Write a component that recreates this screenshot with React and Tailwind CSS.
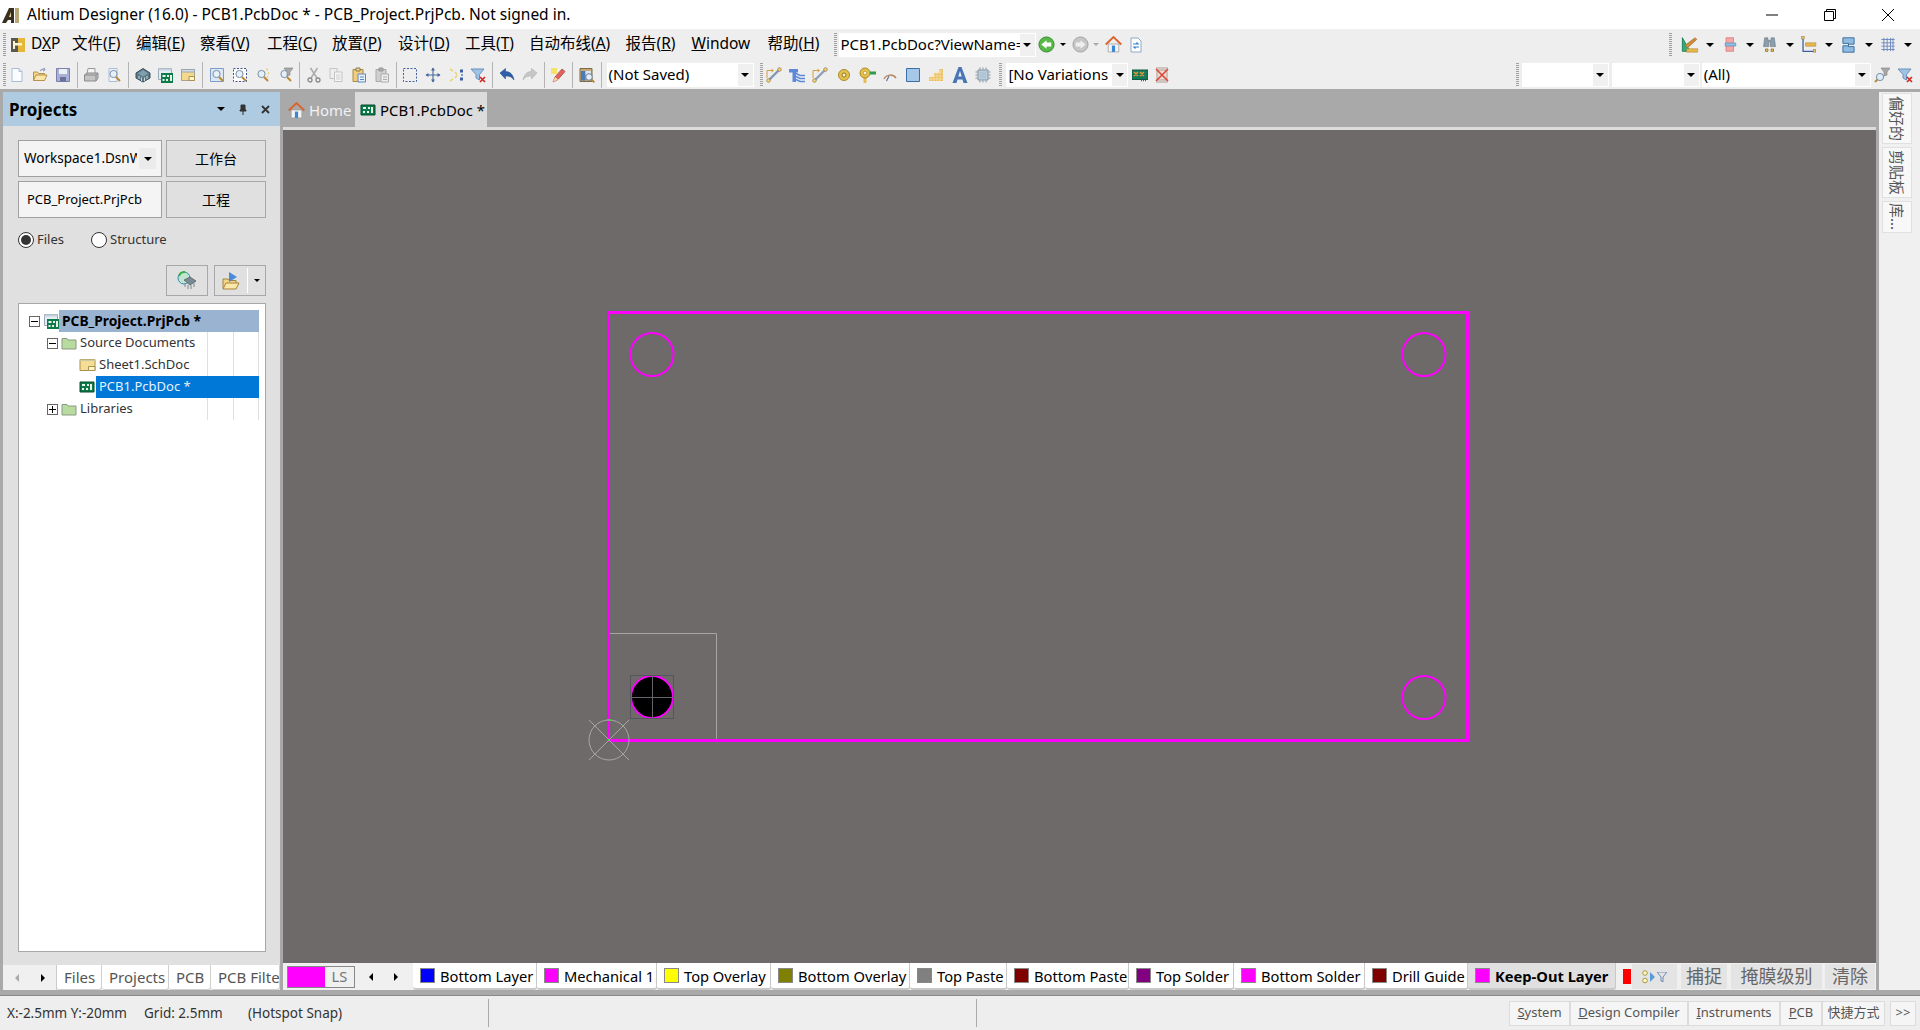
import React from "react";

const S = ({ children, w = 16, h = 16, vb = "0 0 16 16", cls = "" }) => (
  <svg width={w} height={h} viewBox={vb} className={"shrink-0 " + cls}>{children}</svg>
);
const Caret = ({ s = 4, cls = "" }) => (
  <svg width={s * 2} height={s} viewBox="0 0 8 4" className={"shrink-0 " + cls}><path d="M0 0h8L4 4z" fill="#000" /></svg>
);

const New = () => <S><path d="M3 1.500h7l3 3v10H3z" fill="#fafcff" stroke="#a9bdd8" /><path d="M10 1.500v3h3" fill="#dfe8f4" stroke="#a9bdd8" /></S>;
const Open = () => <S><path d="M1.500 5h4l1 1.500h6v7h-11z" fill="#f4d48a" stroke="#b8924a" /><path d="M1.500 13.500 4 8h11l-2.500 5.500z" fill="#fbe6ac" stroke="#b8924a" /><path d="M8 4q2.500-3 5-1.500l-1-1.500M13 2.500 11 4" fill="none" stroke="#8a9ab0" strokeWidth="1.100" /></S>;
const Save = () => <S><path d="M1.500 1.500h13v13h-13z" fill="#a8b0d8" stroke="#7a80a8" /><path d="M4 2h8v5H4z" fill="#eef0f6" /><path d="M5 10h6v4.500H5z" fill="#6a7096" /></S>;
const Print = () => <S><path d="M5 1.500h7v5H4z" fill="#f4f4f4" stroke="#9a9a9a" /><path d="M1.500 8 4 6h11v5l-2 3H1.500z" fill="#c4c4c4" stroke="#8a8a8a" /><path d="M1.500 8H13v6M13 8l2-2" fill="none" stroke="#8a8a8a" /></S>;
const Mag = () => <><circle cx="7.500" cy="7" r="3.600" fill="#e4f0fa" stroke="#7a8ea8" /><path d="M10 10l4 4" stroke="#b88a32" strokeWidth="2" /></>;
const Preview = () => <S><path d="M3 1.500h8v13H3z" fill="#f2f6fb" stroke="#a9bdd8" /><Mag /></S>;
const Cube = () => <S><path d="M8 1.500 15 6v5l-7 4-7-4V6z" fill="#5d7a88" stroke="#3a4c58" /><path d="M8 3 13 6.500 8 9.500 3 6.500z" fill="#7fa0b0" /><path d="M4 9v3M6.500 10.500v3.500M9.500 10.500v3.500M12 9v3" stroke="#c8d8e0" /></S>;
const Board = () => <S><path d="M1 3h14v10H1z" fill="#0b7b4a" stroke="#064d2e" /><path d="M3 5h3v2H3zM8 5h2v2H8zM3 9h2v2H3zM7 9h2v2H7zM11 5h2v6h-2z" fill="#e8f4e8" /></S>;
const BoardDoc = () => <S><path d="M1.500 1.500h13v11h-13z" fill="#e4ecf4" stroke="#9aa8b8" /><path d="M1.500 1.500h13v2h-13z" fill="#c4d0dc" /><path d="M4 6h12v10H4z" fill="#0b7b4a" /><path d="M5.500 8h3v2h-3zM10 8h2v2h-2zM5.500 12h2v2h-2zM9 12h2v2H9zM13 8h2v6h-2z" fill="#e8f4e8" /></S>;
const Sheet = () => <S><path d="M1.500 2.500h13v11h-13z" fill="#f3d98e" stroke="#a8a290" /><path d="M1.500 2.500h13v2.500h-13z" fill="#d4dce6" stroke="#9aa4b0" /><path d="M9 9.500h5.500v4H9z" fill="#fff3c8" stroke="#a8924e" /></S>;
const ZoomA = () => <S><path d="M1.500 1.500h13v13h-13z" fill="#dbe7f5" stroke="#7d9dc8" /><Mag /></S>;
const ZoomB = () => <S><path d="M1.500 1.500h13v13h-13z" fill="#fff" stroke="#3f5488" strokeDasharray="2 1.500" /><Mag /></S>;
const ZoomC = () => <S><Mag /><path d="M13 1.500v2M15 5.500l-1 1.500M13.500 9v1.500" stroke="#e7d06a" strokeWidth="1.500" /></S>;
const ZoomF = () => <S><Mag /><path d="M7 1h9l-3 4v3l-3 1V5z" fill="#a8a8a8" stroke="#808080" strokeWidth=".6" /></S>;
const Cut = () => <S><path d="M4.500 1 11 11M11.500 1 5 11" stroke="#aaa" strokeWidth="1.500" /><circle cx="4" cy="13" r="2" fill="#eee" stroke="#8a8a8a" strokeWidth="1.300" /><circle cx="12" cy="13" r="2" fill="#eee" stroke="#8a8a8a" strokeWidth="1.300" /></S>;
const Copy = () => <S><path d="M2 1.500h7v10H2z" fill="#eee" stroke="#c4c4c4" /><path d="M6.500 5h7.500v9.500H6.500z" fill="#f6f6f6" stroke="#c4c4c4" /><path d="M8 8h4.500M8 10h4.500M8 12h4.500" stroke="#cfcfcf" /></S>;
const Paste = ({ g }) => <S><path d="M2 2.500h10v12H2z" fill={g ? "#d0d0d0" : "#f0cc7c"} stroke={g ? "#aaa" : "#a98a44"} /><path d="M5 1h4v3H5z" fill={g ? "#aaa" : "#e8d8a8"} stroke={g ? "#999" : "#8a7a44"} /><path d="M7 7h7.500v8H7z" fill={g ? "#eee" : "#e8f0fa"} stroke={g ? "#aaa" : "#5e86c0"} /><path d="M9 10h4M9 12.500h4" stroke={g ? "#aaa" : "#5e86c0"} /></S>;
const Sel = () => <S><path d="M1.500 1.500h13v13h-13z" fill="none" stroke="#3f5ea0" strokeDasharray="2 1.500" /></S>;
const Move = () => <S><path d="M8 1v14M1 8h14" stroke="#47689e" strokeWidth="1.100" /><path d="M8 .5 6 3.500h4zM8 15.500l-2-3h4zM.5 8l3-2v4zM15.500 8l-3-2v4z" fill="#47689e" /></S>;
const Dots = () => <S><path d="M2 2l3 2M7 5l2 2.500M7 11l2-2.500M2 14l3-2" stroke="#e7d678" strokeWidth="1.700" /><path d="M12 2.500h3v3h-3zM12 10.500h3v3h-3z" fill="#3f5ea0" /><path d="M13 7h2v2h-2z" fill="#7f9ac8" /></S>;
const FilterX = () => <S><path d="M1 2h13L9.500 7.500V13L6 11V7.500z" fill="#9fc3e4" stroke="#6b90b8" /><path d="M10 10l5 5M15 10l-5 5" stroke="#d02a2a" strokeWidth="1.700" /></S>;
const Undo = () => <S><path d="M1 6 6.500 1.500v3q7 0 8.500 8.500-3-4.500-8.500-4v3z" fill="#2f5fa8" stroke="#1f4478" strokeWidth=".5" /></S>;
const Redo = () => <S><path d="M15 6 9.500 1.500v3Q2.500 4.500 1 13q3-4.500 8.500-4v3z" fill="#c6c6c6" stroke="#aaa" strokeWidth=".5" /></S>;
const Pencil = () => <S><path d="M3 15l2-5 7-8 3 2.500-7 8z" fill="#e3615a" stroke="#a83a36" strokeWidth=".7" /><path d="M1 1h6v6H1z" fill="#f4e26a" /><path d="M3 15l2-5 3 2.500z" fill="#f3d9a8" /></S>;
const Libr = () => <S><path d="M1 1.500h12v13H1z" fill="#c8a878" stroke="#7a6a48" /><path d="M2 4h4.500v9.500H2z" fill="#4a7ab8" /><path d="M6.500 4H12v4H6.500z" fill="#d8e4f0" /><circle cx="10" cy="10" r="3.300" fill="#e4eef8" stroke="#6d7f96" /><path d="M12.300 12.300l3 3" stroke="#a88434" strokeWidth="1.800" /></S>;
const Track = ({ dash }) => <S><path d="M3 13 13 3" stroke={dash ? "#8fa0b8" : "#8296b4"} strokeWidth="2.400" /><path d="M1 11V3.500h6M5.500 2l2 1.500-2 1.500" stroke="#d0a040" strokeWidth="1" fill="none" /><circle cx="2.500" cy="13.500" r="1.800" fill="#f0d27c" stroke="#8a6a26" strokeWidth=".6" /><circle cx="13.500" cy="2.500" r="1.800" fill="#f0d27c" stroke="#8a6a26" strokeWidth=".6" /></S>;
const Bus = () => <S><path d="M0 2h9v3.500H7V15H3.500V5.500H0z" fill="#5c8ad8" /><path d="M7 6.500l4 2h5M7 9.500l4 2h5M7 12.500l4 2h5" stroke="#5c8ad8" strokeWidth="1.400" fill="none" /></S>;
const Pad = () => <S><circle cx="8" cy="8" r="5.500" fill="#e6c04c" stroke="#a88c28" /><circle cx="8" cy="8" r="2" fill="#fff6cf" stroke="#8c7420" /></S>;
const Via = () => <S w={18} vb="0 0 18 16"><path d="M7 10v6" stroke="#e6bc54" strokeWidth="3" /><circle cx="7" cy="6" r="5" fill="#e6c04c" stroke="#a88c28" /><circle cx="7" cy="6" r="1.800" fill="#fff6cf" stroke="#8c7420" strokeWidth=".5" /><path d="M12 4.500h6v3h-6z" fill="#2f9b4a" /></S>;
const Arc = () => <S><path d="M2 12A7 7 0 0 1 14 11" fill="none" stroke="#b58a5a" strokeWidth="1.400" /><path d="M7 9l-2.500 5" stroke="#5f77a8" strokeWidth="1.200" /></S>;
const Fill = () => <S><path d="M1.500 1.500h13v13h-13z" fill="#a6c8e8" stroke="#3e6ea6" /></S>;
const Poly = () => <S><path d="M1 14h14V2H11v4H6v4H1z" fill="#e8be5e" /><path d="M1 12h14M1 9h14M3 10v4M6 6v8M9 3v11M12 2v12M6 6h9M11 4h4" stroke="#fbe6b0" strokeWidth=".7" /></S>;
const AIcon = () => <svg width="16" height="18" viewBox="0 0 16 18" className="shrink-0"><path d="M.5 17 6.500 1h3L15.500 17h-4l-1-3.500H5.500L4.500 17zM6.300 10.500h3.400L8 5z" fill="#4a74b4" /></svg>;
const Chip = () => <S><path d="M3 3h10v10H3z" fill="#c4d4e0" stroke="#7e8f9c" /><path d="M5 .5v2M8 .5v2M11 .5v2M5 13.500v2M8 13.500v2M11 13.500v2M.5 5h2M.5 8h2M.5 11h2M13.500 5h2M13.500 8h2M13.500 11h2" stroke="#8296a6" /><path d="M4.500 4.500h7v7h-7z" fill="#b0c6d6" /></S>;
const VarOn = () => <S><path d="M0 3h16v9.500H0z" fill="#157a58" stroke="#0c5a40" /><path d="M2 5l4 4M6 5 2 9M8 5l4 4M12 5 8 9" stroke="#e89a3a" strokeWidth="1.500" /><path d="M9 13.500h6" stroke="#157a58" strokeWidth="1.500" strokeDasharray="1 1" /></S>;
const VarOff = () => <S><path d="M2 1h12M2 15h12M3 3h10v10H3z" fill="#f0dccc" stroke="#b09a90" /><path d="M2 2l12 12M14 2 2 14" stroke="#d8443c" strokeWidth="1.500" /></S>;
const Back = () => <S w={17} h={17} vb="0 0 18 18"><circle cx="9" cy="9" r="8" fill="#58b848" stroke="#2f8a2a" /><path d="M3.500 9 9 4.500V7h5v4H9v2.500z" fill="#fff" /></S>;
const Fwd = () => <S w={17} h={17} vb="0 0 18 18"><circle cx="9" cy="9" r="8" fill="#c6c6c6" stroke="#a0a0a0" /><path d="M14.500 9 9 4.500V7H4v4h5v2.500z" fill="#efefef" /></S>;
const Home = () => <S w={17} h={17} vb="0 0 16 16"><path d="M3 7.500h10V15H3z" fill="#f4f4f4" stroke="#9a9a9a" strokeWidth=".7" /><path d="M6.500 9h3v6h-3z" fill="#3c86d8" /><path d="M.7 8 8 1l7.300 7" fill="none" stroke="#d8642c" strokeWidth="1.800" /></S>;
const DocSwap = () => <S><path d="M3 1h7l3 3v11H3z" fill="#fff" stroke="#8fa8c8" /><path d="M5 7h5l-1.500-1.500M11 10H6l1.500 1.500" stroke="#2f7fd0" fill="none" strokeWidth="1.200" /></S>;
const Rule = () => <S w={18} h={17} vb="0 0 20 20"><path d="M1 2v16h9z" fill="#28b07a" stroke="#0e7a50" /><path d="M4 11 16 2l2 2L7 14z" fill="#d08a3a" stroke="#8a5a20" strokeWidth=".6" /><path d="M6 15h13v4H6z" fill="#e8b84e" stroke="#a07a24" strokeWidth=".6" /></S>;
const Align = () => <S w={13} h={15} vb="0 0 16 20"><path d="M2 1h10v18H2z" fill="#f7a6a6" stroke="#d07878" /><path d="M1 8h14v4H1z" fill="#8ec0e4" stroke="#5f8fb8" /></S>;
const Bino = () => <S w={13} h={16} vb="0 0 16 20"><path d="M2 1h4v3h4V1h4l1.500 11H9V6H7v6H.5z" fill="#8a9eae" stroke="#50626e" strokeWidth=".6" /><path d="M3 15h3v3H3zM10 15h3v3h-3z" fill="#eec86c" stroke="#8a6a26" /></S>;
const Dim = () => <S w={16} h={17} vb="0 0 18 20"><path d="M2 2v16h15" fill="none" stroke="#3f5ea0" strokeWidth="1.500" /><path d="M5 8h12v4H5z" fill="#e8b84e" stroke="#a07a24" strokeWidth=".6" /><rect x=".5" y=".5" width="3" height="3" fill="#e4c46c" stroke="#8a6a26" strokeWidth=".5" /><rect x="14" y="16" width="3" height="3" fill="#e4c46c" stroke="#8a6a26" strokeWidth=".5" /></S>;
const Room = () => <S w={15} h={16} vb="0 0 16 20"><path d="M1 1h14v8H8v3h7v7H1v-8h7V8H1z" fill="#8fbce0" stroke="#3a6ea0" strokeWidth="1.200" /></S>;
const Grid = () => <S w={14} h={15} vb="0 0 16 18"><path d="M3 1v16M7 1v16M11 1v16M14 1v16M0 3h16M0 7h16M0 11h16M0 15h16" stroke="#5f7eb8" /></S>;
const FilterG = () => <S><circle cx="6" cy="10" r="3.600" fill="#dcecfa" stroke="#7a8ea8" /><path d="M3.500 12.500 1 15" stroke="#b88a32" strokeWidth="2" /><path d="M7 1h9l-3 4v3l-3 1V5z" fill="#a8a8a8" stroke="#808080" strokeWidth=".6" /></S>;
const AltLogo = () => <S w={18} h={18} vb="0 0 18 18"><path d="M0 17 7 2h5v15H9v-3H6l-2 3z" fill="#3a3020" /><path d="M7 11h2V6z" fill="#e8d8a0" /><path d="M13 2h4v15h-4z" fill="#b8a878" /></S>;
const DxpLogo = () => <S><path d="M1 1h14v14H1z" fill="#5a5a50" /><path d="M8 1h7v14H8z" fill="#e6b83a" /><path d="M3 4h2v8H3zM5 6h7v2.500H5z" fill="#fff6cf" /></S>;
const Folder = () => <S><path d="M1 3.500h5l1 1.500h8v9H1z" fill="#b8dca0" stroke="#8a9a82" /></S>;
const SchIcon = () => <S w={17} h={16} vb="0 0 16 16"><path d="M.5 2.500h15v11H.5z" fill="#f6dd96" stroke="#a8924e" /><path d="M.5 2.500h15v1.500H.5z" fill="#cfc8a0" /><path d="M9 9.500h6.500v4H9z" fill="#fff3c8" stroke="#a8924e" /></S>;
const Refresh = () => <S w={20} h={20} vb="0 0 20 20"><circle cx="7" cy="7" r="6" fill="#c4e4d0" stroke="#2c8fb0" /><path d="M2 5a6 6 0 0 1 6-4" stroke="#3ab048" strokeWidth="2" fill="none" /><path d="M7 9 13 6l6 4-6 4z" fill="#7a8a92" stroke="#4a5860" strokeWidth=".7" /><path d="M8 12v4M11 14v4M14 14v4M17 12v4" stroke="#7a8a92" /></S>;
const OpenArrow = () => <S w={18} h={20} vb="0 0 18 20"><path d="M1 8h5l1 1.500h7v8H1z" fill="#f4d48a" stroke="#a88434" /><path d="M1 18l3-6h13l-3 6z" fill="#fbe6ac" stroke="#a88434" /><path d="M7 1l8 5-8 5z" fill="#4a8ad8" /></S>;
const Gripper = ({ h = 24, cls = "" }) => (
  <span className={"shrink-0 w-[3px] bg-[repeating-linear-gradient(to_bottom,#a0a0a0_0,#a0a0a0_1px,transparent_1px,transparent_2px)] " + cls} style={{ height: h }} />
);
const Sep = () => <span className="shrink-0 w-[6px] flex justify-center"><span className="w-px h-[26px] bg-[#b4b4b4]" /></span>;
const Slot = ({ children, w = "w-[22.700px]" }) => <span className={"shrink-0 h-full flex items-center justify-center " + w}>{children}</span>;

const Combo = ({ text, w, arrow = "w-[15px]" }) => (
  <div className={"shrink-0 h-[24px] bg-white flex items-center " + w}>
    <span className="flex-1 min-w-0 overflow-hidden whitespace-nowrap pl-[2px] pb-[2px] text-[15px] leading-[22px] h-[24px]">{text}</span>
    <span className={"shrink-0 h-[22px] bg-[#f0f0f0] flex items-center justify-center mr-[1px] " + arrow}><Caret /></span>
  </div>
);

const menus = [
  ["文件(", "F", ")", "ml-[13px]", "w-[64px]"],
  ["编辑(", "E", ")", "", "w-[64px]"],
  ["察看(", "V", ")", "", "w-[67px]"],
  ["工程(", "C", ")", "", "w-[65px]"],
  ["放置(", "P", ")", "", "w-[66px]"],
  ["设计(", "D", ")", "", "w-[67px]"],
  ["工具(", "T", ")", "", "w-[64px]"],
  ["自动布线(", "A", ")", "", "w-[96.500px]"],
  ["报告(", "R", ")", "", "w-[66px]"],
];

const tool1 = [
  <New />, <Open />, <Save />, 0, <Print />, <Preview />, 0, <Cube />, <BoardDoc />, <Sheet />, 0,
  <ZoomA />, <ZoomB />, <ZoomC />, <ZoomF />, 0, <Cut />, <Copy />, <Paste />, <Paste g />, 0,
  <Sel />, <Move />, <Dots />, <FilterX />, 0, <Undo />, <Redo />, 0, <Pencil />, 0, <Libr />, 0,
];
const tool2 = [<Track />, <Bus />, <Track dash />, <Pad />, <Via />, <Arc />, <Fill />, <Poly />, <AIcon />, <Chip />];

const layers = [
  ["Bottom Layer", "#0000ff", "w-[124px]"],
  ["Mechanical 1", "#ff00ff", "w-[120px]"],
  ["Top Overlay", "#ffff00", "w-[114px]"],
  ["Bottom Overlay", "#808000", "w-[139px]"],
  ["Top Paste", "#808080", "w-[97px]"],
  ["Bottom Paste", "#800000", "w-[122px]"],
  ["Top Solder", "#800080", "w-[105px]"],
  ["Bottom Solder", "#ff00ff", "w-[131px]"],
  ["Drill Guide", "#800000", "w-[103px]"],
];

const Ctl = ({ children, w }) => (
  <div className={"shrink-0 h-full bg-[#e4e4e4] border border-[#f0f0f0] flex items-center justify-center text-[18px] text-[#666] " + w}>{children}</div>
);

const TreeCols = () => (
  <>
    <span className="w-px h-full bg-[#e0e0e0] shrink-0" />
    <span className="w-[25px] shrink-0" />
    <span className="w-px h-full bg-[#e0e0e0] shrink-0" />
    <span className="w-[24px] shrink-0" />
    <span className="w-px h-full bg-[#e0e0e0] shrink-0" />
  </>
);
const PM = ({ plus, cls }) => (
  <span className={"block w-[11px] h-[11px] border border-[#666] bg-white relative shrink-0 " + cls}>
    <span className="absolute left-[1px] right-[1px] top-[4px] h-px bg-black" />
    {plus && <span className="absolute top-[1px] bottom-[1px] left-[4px] w-px bg-black" />}
  </span>
);

const StatusBtn = ({ children, w, cls = "" }) => (
  <div className={"shrink-0 h-full bg-[#f5f5f5] border border-[#dcdcdc] flex items-center justify-center text-[13px] text-[#555] " + w + " " + cls}>{children}</div>
);

const Rot = ({ t, h }) => (
  <div className={"w-[30px] bg-[#f8f8f8] border border-[#e0e0e0] flex items-center justify-center mb-[3px] text-[15px] text-[#555] [writing-mode:vertical-rl] [text-orientation:sideways] " + h}>{t}</div>
);

const T = ({ children, cls = "" }) => <span className={"shrink-0 pb-[2px] " + cls}>{children}</span>;

export default function App() {
  return (
    <div className="w-[1920px] h-[1030px] overflow-hidden flex flex-col bg-[#eeeeee] text-black font-['Noto_Sans','Noto_Sans_CJK_SC',sans-serif]">
      {/* title */}
      <div className="h-[29px] bg-white flex items-center shrink-0">
        <span className="ml-[2px] mr-[7px]"><AltLogo /></span>
        <span className="text-[15.500px] whitespace-nowrap leading-[29px]">Altium Designer (16.0) - PCB1.PcbDoc * - PCB_Project.PrjPcb. Not signed in.</span>
        <div className="ml-auto flex items-center h-full">
          <span className="w-[58px] flex justify-center"><svg width="14" height="14" viewBox="0 0 14 14"><path d="M1 7h12" stroke="#000" /></svg></span>
          <span className="w-[58px] flex justify-center"><svg width="14" height="14" viewBox="0 0 14 14"><path d="M1.500 3.500h9v9h-9zM3.500 3.500v-2h9v9h-2" fill="none" stroke="#000" /></svg></span>
          <span className="w-[58px] flex justify-center mr-[3px]"><svg width="14" height="14" viewBox="0 0 14 14"><path d="M1 1l12 12M13 1 1 13" stroke="#000" /></svg></span>
        </div>
      </div>
      {/* menu */}
      <div className="h-[31px] flex items-center shrink-0 text-[15.500px] whitespace-nowrap">
        <Gripper cls="ml-[3px]" />
        <span className="ml-[4px] mr-[5px]"><DxpLogo /></span>
        <T cls="w-[28px]">D<u>X</u>P</T>
        {menus.map((m, i) => (
          <T key={i} cls={m[3] + " " + m[4]}>{m[0]}<u>{m[1]}</u>{m[2]}</T>
        ))}
        <T cls="w-[76px]"><u>W</u>indow</T>
        <T cls="w-[66px]">帮助(<u>H</u>)</T>
        <Gripper />
        <span className="ml-[2px]"><Combo text="PCB1.PcbDoc?ViewName=PCBEditor" w="w-[197px]" /></span>
        <span className="ml-[1px] w-[20px] flex justify-center"><Back /></span>
        <span className="w-[13px] flex justify-center"><Caret s={3} /></span>
        <span className="w-[20px] flex justify-center ml-[1px]"><Fwd /></span>
        <span className="w-[11px] flex justify-center"><svg width="6" height="3" viewBox="0 0 6 3"><path d="M0 0h6L3 3z" fill="#aaa" /></svg></span>
        <span className="w-[23px] flex justify-center"><Home /></span>
        <span className="w-[23px] flex justify-center"><DocSwap /></span>
        <div className="ml-auto mr-[5px] flex items-center h-full">
          <Gripper cls="mr-[5px]" />
          {[<Rule />, <Align />, <Bino />, <Dim />, <Room />, <Grid />].map((ic, i) => (
            <span key={i} className="w-[39.600px] shrink-0 flex items-center">
              <span className="w-[26px] flex justify-center">{ic}</span>
              <span className="ml-[3px]"><Caret /></span>
            </span>
          ))}
        </div>
      </div>
      {/* toolbar */}
      <div className="h-[29px] flex items-center shrink-0 whitespace-nowrap">
        <Gripper cls="ml-[3px]" />
        {tool1.map((t, i) => (t === 0 ? <Sep key={i} /> : <Slot key={i}>{t}</Slot>))}
        <span className="ml-[2px]"><Combo text="(Not Saved)" w="w-[147px]" /></span>
        <Gripper cls="ml-[6px]" />
        {tool2.map((t, i) => <Slot key={i} w="w-[23.200px]">{t}</Slot>)}
        <Gripper cls="ml-[5px] mr-[4px]" />
        <Combo text="[No Variations" w="w-[122px]" />
        <Slot><VarOn /></Slot>
        <Slot><VarOff /></Slot>
        <div className="ml-auto mr-[4px] flex items-center h-full">
          <Gripper cls="mr-[3px]" />
          <Combo text="" w="w-[87px]" />
          <span className="w-[3px]" />
          <Combo text="" w="w-[88px]" />
          <span className="w-[2px]" />
          <Combo text="(All)" w="w-[169px]" />
          <Slot><FilterG /></Slot>
          <Slot><FilterX /></Slot>
        </div>
      </div>

      {/* main */}
      <div className="flex-1 min-h-0 flex bg-[#a9a9a9] pt-[3px] pb-[5px] border-b border-b-[#8a8a8a]">
        {/* left panel */}
        <div className="w-[277px] ml-[3px] shrink-0 flex flex-col bg-[#e0e0e0]">
          <div className="h-[34px] shrink-0 bg-[#aecbe1] flex items-center pl-[6px] pr-[10px]">
            <span className="text-[17px] font-bold pt-[2px]">Projects</span>
            <span className="ml-auto flex items-center gap-[13px]">
              <Caret s={4} />
              <svg width="10" height="11" viewBox="0 0 10 11"><path d="M3 1h4v5h1v1H2V6h1zM5 7v4" stroke="#333" fill="#333" /></svg>
              <svg width="9" height="9" viewBox="0 0 9 9"><path d="M1 1l7 7M8 1 1 8" stroke="#333" strokeWidth="1.800" /></svg>
            </span>
          </div>
          <div className="flex-1 min-h-0 flex flex-col pl-[15px] pr-[14px] pt-[14px] pb-[13px]">
            <div className="flex gap-[4px] h-[37px] shrink-0">
              <div className="w-[144px] bg-[#f4f4f4] border border-[#a0a0a0] flex items-center pl-[5px] text-[13.500px]">
                <span className="flex-1 overflow-hidden whitespace-nowrap">Workspace1.DsnWrk</span>
                <span className="w-[17px] h-[21px] ml-[2px] mr-[5px] bg-[#ebebeb] flex items-center justify-center shrink-0"><Caret /></span>
              </div>
              <div className="w-[100px] bg-[#e0e0e0] border border-[#a8a8a8] flex items-center justify-center text-[14px]">工作台</div>
            </div>
            <div className="flex gap-[4px] h-[37px] mt-[4px] shrink-0">
              <div className="w-[144px] bg-[#f4f4f4] border border-[#a0a0a0] flex items-center pl-[8px] text-[13px]">PCB_Project.PrjPcb</div>
              <div className="w-[100px] bg-[#e0e0e0] border border-[#a8a8a8] flex items-center justify-center text-[14px]">工程</div>
            </div>
            <div className="flex items-center h-[22px] mt-[11px] text-[13px] shrink-0 text-[#333]">
              <span className="w-[16px] h-[16px] rounded-full bg-white border border-[#333] flex items-center justify-center shrink-0"><span className="w-[10px] h-[10px] rounded-full bg-[#333]" /></span>
              <span className="ml-[3px] w-[54px]">Files</span>
              <span className="w-[16px] h-[16px] rounded-full bg-white border border-[#333] shrink-0" />
              <span className="ml-[3px]">Structure</span>
            </div>
            <div className="flex justify-end gap-[6px] h-[31px] mt-[14px] shrink-0">
              <div className="w-[42px] border border-[#a8a8a8] flex items-center justify-center"><Refresh /></div>
              <div className="w-[52px] border border-[#a8a8a8] flex items-center">
                <span className="w-[32px] flex justify-center"><OpenArrow /></span>
                <span className="w-px h-[25px] bg-white" />
                <span className="flex-1 flex justify-center"><Caret s={3} /></span>
              </div>
            </div>
            {/* tree */}
            <div className="flex-1 min-h-0 mt-[7px] bg-white border border-[#a8a8a8] pt-[6px] pr-[6px] text-[13px] text-[#333] whitespace-nowrap">
              <div className="h-[22px] flex items-center">
                <PM cls="ml-[10px]" />
                <span className="ml-[3px]"><BoardDoc /></span>
                <span className="ml-0 flex-1 h-full bg-[#9ab3d0] flex items-center pl-[3px] font-bold text-[13.800px] text-black">PCB_Project.PrjPcb *</span>
              </div>
              <div className="h-[22px] flex items-center">
                <PM cls="ml-[28px]" />
                <span className="ml-[3px]"><Folder /></span>
                <span className="ml-[3px] flex-1">Source Documents</span>
                <TreeCols />
              </div>
              <div className="h-[22px] flex items-center">
                <span className="ml-[60px]"><SchIcon /></span>
                <span className="ml-[3px] flex-1">Sheet1.SchDoc</span>
                <TreeCols />
              </div>
              <div className="h-[22px] flex items-center">
                <span className="ml-[60px]"><Board /></span>
                <span className="ml-[1px] flex-1 h-full bg-[#0078d7] text-[#e8f2fa] flex items-center pl-[3px]">PCB1.PcbDoc *</span>
              </div>
              <div className="h-[22px] flex items-center">
                <PM plus cls="ml-[28px]" />
                <span className="ml-[3px]"><Folder /></span>
                <span className="ml-[3px] flex-1">Libraries</span>
                <TreeCols />
              </div>
            </div>
          </div>
          <div className="h-[25px] shrink-0 bg-[#f0f0f0] flex items-stretch text-[15px] text-[#555] whitespace-nowrap">
            <span className="w-[27px] flex items-center justify-center"><svg width="4" height="8" viewBox="0 0 4 8"><path d="M4 0v8L0 4z" fill="#aaa" /></svg></span>
            <span className="w-[27px] flex items-center justify-center border-r border-[#ccc]"><svg width="4" height="8" viewBox="0 0 4 8"><path d="M0 0v8l4-4z" fill="#000" /></svg></span>
            {[["Files", "w-[45px]"], ["Projects", "w-[67px]"], ["PCB", "w-[42px]"], ["PCB Filter", "w-[69px]"]].map(([t, w]) => (
              <span key={t} className={"bg-white border-r border-b border-[#cfcfcf] rounded-b-[3px] overflow-hidden flex items-center pl-[7px] pt-[1px] shrink-0 " + w}>{t}</span>
            ))}
          </div>
        </div>

        {/* center */}
        <div className="w-[1593px] ml-[3px] shrink-0 flex flex-col">
          <div className="h-[35px] shrink-0 flex items-stretch pl-[2px] text-[14.900px]">
            <div className="w-[70px] flex items-center pl-[3px] gap-[4px] text-[#f2f2f2] pt-[1px]"><Home /><span>Home</span></div>
            <div className="w-[132px] bg-[#dcdcdc] flex items-center pl-[5px] gap-[4px] pt-[1px]"><Board /><span className="whitespace-nowrap">PCB1.PcbDoc *</span></div>
          </div>
          <div className="h-[3px] shrink-0 bg-[#dcdcdc]" />
          <div className="flex-1 min-h-0 bg-[#6e6a69]">
            <svg className="w-full h-full block" viewBox="283 130 1593 833">
              <path d="M716.500 740V633.500H608" fill="none" stroke="#a9a5a4" />
              <rect x="608" y="312" width="859" height="428" fill="none" stroke="#ff00ff" strokeWidth="3" shapeRendering="crispEdges" />
              <circle cx="652" cy="354.500" r="21.500" fill="none" stroke="#ff00ff" strokeWidth="2" />
              <circle cx="1424" cy="354.500" r="21.500" fill="none" stroke="#ff00ff" strokeWidth="2" />
              <circle cx="1424" cy="697.500" r="21.500" fill="none" stroke="#ff00ff" strokeWidth="2" />
              <circle cx="652" cy="697" r="21" fill="#000" stroke="#ff00ff" strokeWidth="2" />
              <rect x="630.500" y="675.500" width="43" height="43" fill="none" stroke="#55555f" />
              <path d="M652.500 676v42M631 697.500h42" stroke="#66636a" />
              <circle cx="609" cy="740" r="20" fill="none" stroke="#a9a5a4" />
              <path d="M589 720l40 40M629 720l-40 40" stroke="#a9a5a4" />
              <circle cx="609" cy="740" r="1.200" fill="#22ff22" />
              <path d="M607 720h4" stroke="#22ff22" />
            </svg>
          </div>
          <div className="h-[27px] shrink-0 bg-[#f0f0f0] flex items-stretch whitespace-nowrap text-[14.700px]">
            <div className="w-[130px] shrink-0 flex items-center">
              <div className="ml-[4px] h-[22px] w-[68px] flex border border-[#888] shrink-0">
                <span className="w-[37px] bg-[#ff00ff]" />
                <span className="flex-1 flex items-center justify-center text-[#777]">LS</span>
              </div>
              <span className="ml-[14px]"><svg width="4" height="8" viewBox="0 0 4 8"><path d="M4 0v8L0 4z" fill="#000" /></svg></span>
              <span className="ml-[21px]"><svg width="4" height="8" viewBox="0 0 4 8"><path d="M0 0v8l4-4z" fill="#000" /></svg></span>
            </div>
            {layers.map(([t, c, w]) => (
              <div key={t} className={"shrink-0 bg-white border-b-2 border-r border-[#c8c8c8] rounded-b-[3px] flex items-center pl-[7px] gap-[5px] " + w}>
                <span className="w-[15px] h-[15px] border border-[#888] shrink-0" style={{ background: c }} />
                <span className="pt-[2px]">{t}</span>
              </div>
            ))}
            <div className="w-[148px] shrink-0 bg-[#e0e0e0] border-b-2 border-r border-[#c8c8c8] rounded-b-[3px] flex items-center pl-[7px] gap-[5px] font-bold">
              <span className="w-[15px] h-[15px] border border-[#888] bg-[#ff00ff] shrink-0" />
              <span className="pt-[2px]">Keep-Out Layer</span>
            </div>
            <div className="w-[15px] shrink-0 flex items-center overflow-hidden pl-[7px]">
              <span className="w-[8px] h-[15px] bg-[#ff0000] shrink-0" />
            </div>
            <Ctl w="w-[47px] gap-[2px]">
              <svg width="6" height="14" viewBox="0 0 6 14"><circle cx="3" cy="3" r="2.300" fill="#fff6cf" stroke="#a89a3a" /><circle cx="3" cy="10.500" r="2.300" fill="#fff6cf" stroke="#a89a3a" /></svg>
              <svg width="5" height="10" viewBox="0 0 5 10"><path d="M0 0v10l5-5z" fill="#5a9ad8" /></svg>
              <svg width="10" height="10" viewBox="0 0 10 10"><path d="M0 0h10L6 5v5L4 9V5z" fill="none" stroke="#6a8ab8" /></svg>
            </Ctl>
            <span className="w-[2px] shrink-0" />
            <Ctl w="w-[48px]">捕捉</Ctl>
            <span className="w-[2px] shrink-0" />
            <Ctl w="w-[93px]">掩膜级别</Ctl>
            <span className="w-px shrink-0" />
            <Ctl w="w-[52px]">清除</Ctl>
          </div>
        </div>

        {/* right strip */}
        <div className="w-[41px] ml-[3px] shrink-0 bg-[#f0f0f0] pl-[3px] pt-[1px] flex flex-col">
          <Rot t="偏好的" h="h-[51px]" />
          <Rot t="剪贴板" h="h-[51px]" />
          <Rot t="库..." h="h-[32px]" />
        </div>
      </div>

      {/* status */}
      <div className="h-[34px] shrink-0 flex items-center text-[13.500px] text-[#333] whitespace-nowrap">
        <span className="ml-[7px] w-[137px]">X:-2.5mm Y:-20mm</span>
        <span className="w-[104px]">Grid: 2.5mm</span>
        <span className="w-[240px]">(Hotspot Snap)</span>
        <span className="w-px h-[28px] bg-[#aaa]" />
        <span className="w-[487px]" />
        <span className="w-px h-[28px] bg-[#aaa]" />
        <div className="ml-auto mr-[4px] h-[25px] flex items-stretch">
          <StatusBtn w="w-[61px]"><span><u>S</u>ystem</span></StatusBtn>
          <StatusBtn w="w-[118px]"><span><u>D</u>esign Compiler</span></StatusBtn>
          <StatusBtn w="w-[92px]"><span><u>I</u>nstruments</span></StatusBtn>
          <StatusBtn w="w-[42px]"><span><u>P</u>CB</span></StatusBtn>
          <StatusBtn w="w-[63px]">快捷方式</StatusBtn>
          <span className="w-[5px]" />
          <StatusBtn w="w-[26px]">&gt;&gt;</StatusBtn>
        </div>
      </div>
    </div>
  );
}
